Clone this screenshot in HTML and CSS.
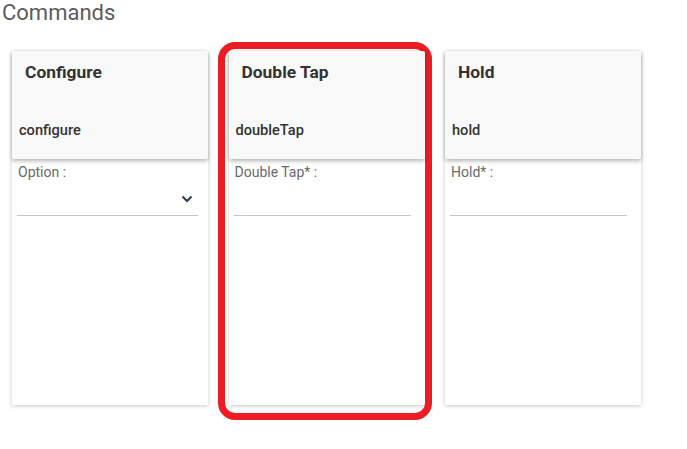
FILE: index.html
```html
<!DOCTYPE html>
<html>
<head>
<meta charset="utf-8">
<link rel="stylesheet" href="styles.css">
</head>
<body>
<div class="page">
<h1 class="title">Commands</h1>
<div class="cards">
  <div class="card">
    <div class="card-head">
      <div class="card-title">Configure</div>
      <div class="card-sub">configure</div>
    </div>
    <div class="card-body">
      <div class="field-label">Option :</div>
      <div class="field select">
        <svg class="chev" width="12" height="8" viewBox="0 0 12 8"><path d="M1.5 1.5 L6 6 L10.5 1.5" fill="none" stroke="#2f3b52" stroke-width="2"/></svg>
      </div>
    </div>
  </div>
  <div class="card highlighted">
    <div class="card-head">
      <div class="card-title">Double Tap</div>
      <div class="card-sub">doubleTap</div>
    </div>
    <div class="card-body">
      <div class="field-label">Double Tap* :</div>
      <div class="field input"></div>
    </div>
  </div>
  <div class="card">
    <div class="card-head">
      <div class="card-title">Hold</div>
      <div class="card-sub">hold</div>
    </div>
    <div class="card-body">
      <div class="field-label">Hold* :</div>
      <div class="field input"></div>
    </div>
  </div>
</div>
</div>
</body>
</html>
```

FILE: styles.css
```css
html, body {
  margin: 0;
  padding: 0;
  background: #ffffff;
  font-family: Roboto, "Liberation Sans", sans-serif;
}
.page {
  min-height: 449px;
}
.title {
  margin: 0;
  padding: 0 0 0 2px;
  font-size: 22px;
  font-weight: 400;
  line-height: 26px;
  color: #5b5b5b;
}
.cards {
  display: flex;
  gap: 20.5px;
  padding: 25px 0 0 12px;
}
.card {
  position: relative;
  width: 196px;
  height: 354px;
  background: #fff;
  box-shadow: 0 1px 4px rgba(0,0,0,0.22);
  display: flex;
  flex-direction: column;
}
.card.highlighted::after {
  content: "";
  position: absolute;
  left: -11px;
  top: -9px;
  right: -7px;
  bottom: -15px;
  border: 7px solid #ec1c24;
  border-radius: 17px;
}
.card-head {
  height: 108px;
  flex: none;
  background: #f9f9f9;
  border-radius: 2px;
  box-shadow: 0 2px 4px rgba(0,0,0,0.3);
  position: relative;
  z-index: 1;
  box-sizing: border-box;
  padding: 11px 0 0 0;
}
.card-title {
  padding-left: 13px;
  font-size: 17.4px;
  font-weight: 700;
  color: #333;
  line-height: 21px;
}
.card-sub {
  margin-top: 38px;
  padding-left: 7px;
  font-size: 14.6px;
  font-weight: 500;
  color: #333;
  line-height: 19px;
}
.card-body {
  padding: 5px 14px 0 5px;
}
.field-label {
  padding-left: 1px;
  font-size: 14px;
  color: #6a6a6a;
  line-height: 17px;
}
.field {
  height: 34px;
  border-bottom: 1px solid #c6c6c6;
  position: relative;
}
.field.select {
  margin-right: -4px;
}
.chev {
  position: absolute;
  right: 5px;
  top: 14px;
}
```
